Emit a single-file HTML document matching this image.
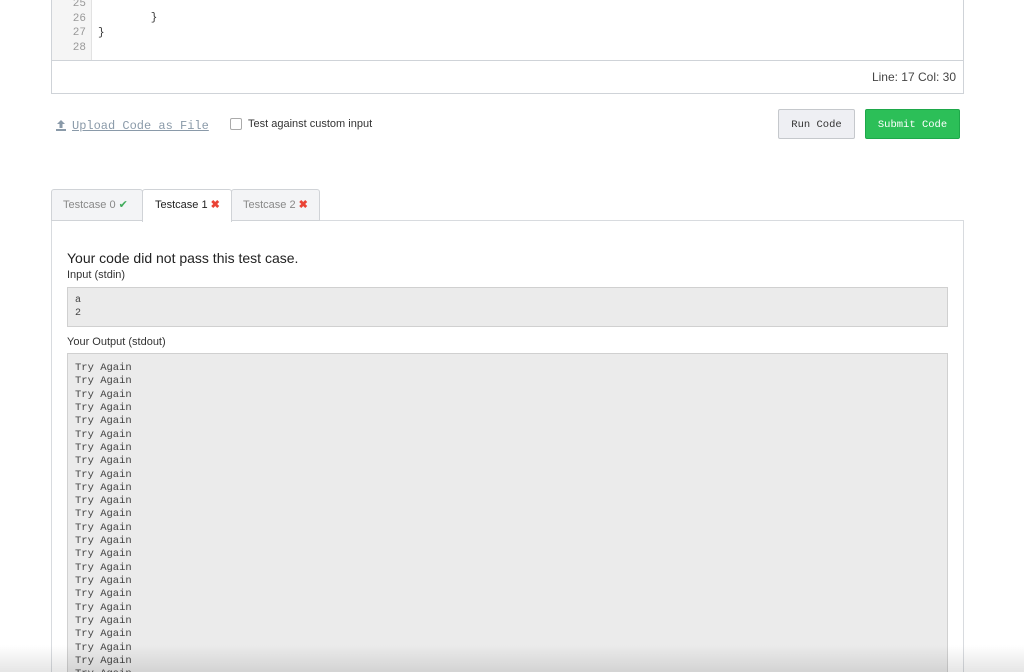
<!DOCTYPE html>
<html style="overflow:hidden;height:672px"><head><meta charset="utf-8"><style>
*{box-sizing:border-box;margin:0;padding:0}
body{width:1024px;height:672px;overflow:hidden;background:#fff;font-family:"Liberation Sans",sans-serif;position:relative;color:#333}
.mono{font-family:"Liberation Mono","DejaVu Sans Mono",monospace}
.abs{position:absolute}
</style></head><body>
<div class="abs" style="left:51px;top:-2px;width:913px;height:96px;border:1px solid #cfd3d8;border-top:none"></div>
<div class="abs" style="left:52px;top:0;width:40px;height:60px;background:#f5f5f5;border-right:1px solid #e2e2e2"></div>
<div class="abs mono" style="left:52px;top:-3px;width:34px;text-align:right;font-size:11px;line-height:14.7px;color:#999">25<br>26<br>27<br>28</div>
<div class="abs mono" style="left:98px;top:11px;font-size:11px;line-height:14.7px;color:#333;white-space:pre">        }
}</div>
<div class="abs" style="left:52px;top:60px;width:911px;height:1px;background:#cfd3d8"></div>
<div class="abs" style="right:68px;top:70px;font-size:12px;color:#444">Line: 17 Col: 30</div>

<div class="abs" style="left:55px;top:118px;width:12px;height:12px">
<svg width="12" height="12" viewBox="0 0 12 12"><path d="M6 1 L10 5 H7.5 V9 H4.5 V5 H2 Z" fill="#8a9aa9"/><rect x="1" y="10" width="10" height="2" fill="#8a9aa9"/></svg></div>
<div class="abs mono" style="left:72px;top:119px;font-size:12px;color:#8a9aa9;text-decoration:underline">Upload Code as File</div>
<div class="abs" style="left:230px;top:118px;width:12px;height:12px;border:1px solid #aaa;border-radius:2px;background:#fff"></div>
<div class="abs" style="left:248px;top:118px;font-size:11px;color:#333">Test against custom input</div>
<div class="abs mono" style="left:778px;top:109px;width:77px;height:30px;border:1px solid #c5c8cc;background:#eeeff3;border-radius:2px;font-size:10.5px;line-height:30px;text-align:center;color:#333">Run Code</div>
<div class="abs mono" style="left:865px;top:109px;width:95px;height:30px;border:1px solid #1ea84a;background:#2cbf58;border-radius:2px;font-size:10.5px;line-height:30px;text-align:center;color:#fff">Submit Code</div>

<div class="abs" style="left:51px;top:220px;width:913px;height:460px;border:1px solid #d8dbdf"></div>
<div class="abs" style="left:51px;top:189px;width:92px;height:32px;background:#f3f4f6;border:1px solid #d0d3d7;border-radius:3px 3px 0 0;font-size:11px;line-height:31px;padding-left:11px;color:#888">Testcase 0 <span style="color:#3fab5a">✔</span></div>
<div class="abs" style="left:142px;top:189px;width:90px;height:33px;background:#fff;border:1px solid #d0d3d7;border-bottom:none;border-radius:3px 3px 0 0;font-size:11px;line-height:31px;padding-left:12px;color:#222">Testcase 1 <span style="color:#ea4335;font-weight:bold">✖</span></div>
<div class="abs" style="left:231px;top:189px;width:89px;height:32px;background:#f3f4f6;border:1px solid #d0d3d7;border-radius:3px 3px 0 0;font-size:11px;line-height:31px;padding-left:11px;color:#888">Testcase 2 <span style="color:#ea4335;font-weight:bold">✖</span></div>

<div class="abs" style="left:67px;top:250px;font-size:14px;color:#222">Your code did not pass this test case.</div>
<div class="abs" style="left:67px;top:269px;font-size:11px;color:#333">Input (stdin)</div>
<div class="abs mono" style="left:67px;top:287px;width:881px;height:40px;background:#ebebeb;border:1px solid #d0d0d0;padding:6px 0 0 7px;font-size:10px;line-height:13px;color:#444">a<br>2</div>
<div class="abs" style="left:67px;top:336px;font-size:11px;color:#333">Your Output (stdout)</div>
<div class="abs mono" style="left:67px;top:353px;width:881px;height:319px;overflow:hidden;background:#ebebeb;border:1px solid #d0d0d0;border-bottom:none;padding:8px 0 0 7px;font-size:10.5px;line-height:13.32px;color:#444;white-space:pre">Try Again
Try Again
Try Again
Try Again
Try Again
Try Again
Try Again
Try Again
Try Again
Try Again
Try Again
Try Again
Try Again
Try Again
Try Again
Try Again
Try Again
Try Again
Try Again
Try Again
Try Again
Try Again
Try Again
Try Again</div>
<div class="abs" style="left:0;top:645px;width:1024px;height:27px;background:linear-gradient(rgba(0,0,0,0),rgba(0,0,0,0.1))"></div>
</body></html>
